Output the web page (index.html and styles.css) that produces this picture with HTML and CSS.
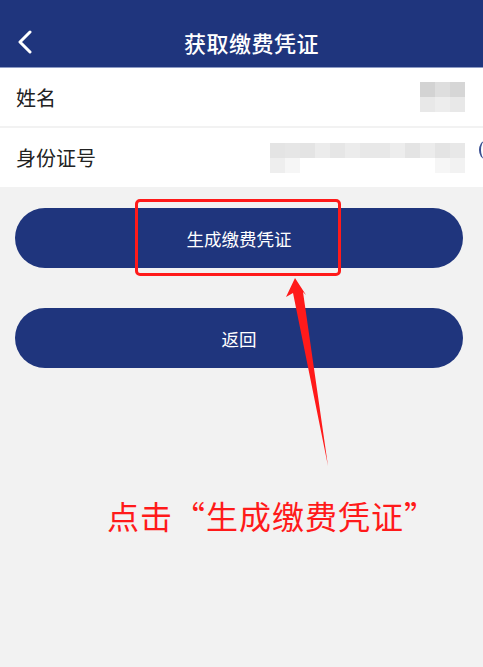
FILE: index.html
```html
<!DOCTYPE html>
<html lang="zh-CN">
<head>
  <meta charset="UTF-8" />
  <meta name="viewport" content="width=device-width, initial-scale=1.0"/>
  <title>获取缴费凭证</title>
  <link rel="stylesheet" href="styles.css">
</head>
<body>

  <header class="topbar">
    <svg class="back" width="20" height="26" viewBox="0 0 20 26">
      <polyline points="13,2 3,12 13,22" fill="none" stroke="#fff" stroke-width="3" stroke-linecap="round" stroke-linejoin="round"/>
    </svg>
    <h1>获取缴费凭证</h1>
  </header>

  <div class="form">
    <div class="row">
      <span class="label">姓名</span>
      <!-- masked value -->
      <div class="mask mask-name">
        <i style="background:#d3d3d3"></i><i style="background:#dedede"></i><i style="background:#d6d6d6"></i>
        <i style="background:#e8e8e8"></i><i style="background:#ededed"></i><i style="background:#e8e8e8"></i>
      </div>
    </div>
    <div class="row">
      <span class="label">身份证号</span>
      <div class="mask mask-id">
        <i style="background:#e4e4e4"></i><i style="background:#e6e6e6"></i><i style="background:#e4e4e4"></i><i style="background:#ececec"></i><i style="background:#e6e6e6"></i><i style="background:#ececec"></i><i style="background:#e8e8e8"></i><i style="background:#e8e8e8"></i><i style="background:#ededed"></i><i style="background:#e4e4e4"></i><i style="background:#ececec"></i><i style="background:#e4e4e4"></i><i style="background:#e8e8e8"></i>
        <i style="background:#eeeeee"></i><i style="background:#f6f6f6"></i><i></i><i></i><i></i><i></i><i></i><i></i><i></i><i></i><i></i><i style="background:#f6f6f6"></i><i style="background:#f2f2f2"></i>
      </div>
      <span class="edge"></span>
    </div>
  </div>

  <div class="actions">
    <button class="btn">生成缴费凭证</button>
    <button class="btn">返回</button>
  </div>

  <!-- annotation overlay -->
  <div class="mark-box"></div>
  <svg class="mark-arrow" width="483" height="667" viewBox="0 0 483 667">
    <polygon points="295,278 286,297 293,293 328,466 303,292 306,295" fill="#ff1a1a"/>
  </svg>
  <p class="mark-text">点击“生成缴费凭证”</p>

</body>
</html>
```

FILE: styles.css
```css
body {
  margin: 0;
  background: #f2f2f2;
  font-family: "Noto Sans CJK SC", "Noto Sans", sans-serif;
  color: #222;
  position: relative;
  min-height: 667px;
  overflow: hidden;
}
.topbar {
  height: 68px;
  background: #1f357d;
  display: flex;
  align-items: center;
  justify-content: center;
  position: relative;
  border-bottom: 1px solid #8d9bc4;
  box-sizing: border-box;
  padding-top: 16px;
}
.topbar h1 {
  margin: 0 0 0 20px;
  color: #fff;
  font-size: 22px;
  font-weight: 500;
  letter-spacing: 0.5px;
}
.back {
  position: absolute;
  left: 17px;
  top: 30px;
}
.form {
  background: #f2f2f2;
}
.row {
  height: 58px;
  background: #fff;
  display: flex;
  align-items: center;
  padding: 0 16px;
  position: relative;
}
.row + .row {
  margin-top: 2px;
  height: 59px;
}
.label {
  font-size: 20px;
  flex: 1;
}
.mask {
  display: grid;
  grid-auto-rows: 15px;
  margin-right: 2px;
}
.mask i {
  display: block;
}
.mask-name {
  grid-template-columns: repeat(3, 15px);
}
.mask-id {
  grid-template-columns: repeat(13, 15px);
}
.edge {
  position: absolute;
  right: -8px;
  top: 13px;
  width: 10px;
  height: 18px;
  border-radius: 50%;
  border-left: 2px solid #3a4f92;
}
.actions {
  display: flex;
  flex-direction: column;
  gap: 40px;
  padding: 21px 20px 0 15px;
}
.btn {
  height: 60px;
  border: none;
  border-radius: 30px;
  background: #1f357d;
  color: #fff;
  font-family: inherit;
  font-size: 17.5px;
}
.mark-box {
  position: absolute;
  left: 135px;
  top: 199px;
  width: 200px;
  height: 71px;
  border: 3px solid #ff1a1a;
  border-radius: 5px;
}
.mark-arrow {
  position: absolute;
  left: 0;
  top: 0;
}
.mark-text {
  position: absolute;
  left: 107px;
  top: 492px;
  margin: 0;
  color: #ff1a1a;
  font-size: 32px;
  line-height: 46px;
  letter-spacing: 1px;
}
```
